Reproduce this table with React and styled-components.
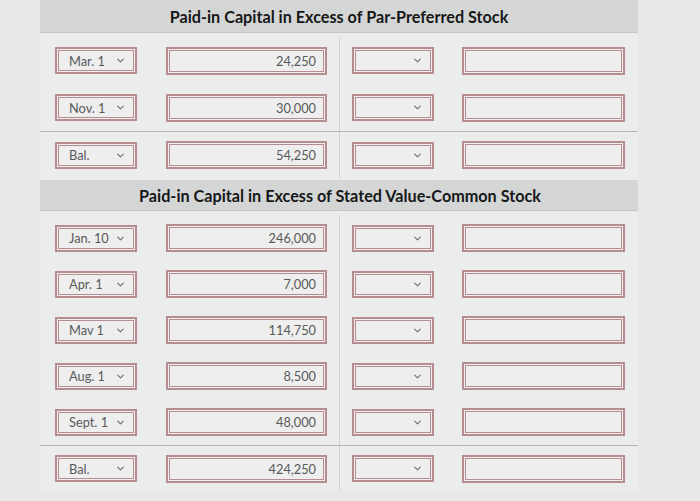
import React from 'react';
import styled, { createGlobalStyle } from 'styled-components';
import { ChevronDown } from 'lucide-react';

const GlobalStyle = createGlobalStyle`
  body {
    margin: 0;
    background: #e7e8e8;
    font-family: Lato, "Open Sans", sans-serif;
  }
`;

const Page = styled.div`
  width: 700px;
  height: 501px;
  overflow: hidden;
  padding-left: 40px;
  box-sizing: border-box;
`;

const Table = styled.div`
  width: 598px;
  background: #ebecec;
`;

const Header = styled.div`
  height: ${(p) => p.h}px;
  background: #d4d6d6;
  border-bottom: 1px solid #c4c6c6;
  box-sizing: border-box;
  display: flex;
  align-items: center;
  justify-content: center;
  margin-top: ${(p) => p.mt || 0}px;
`;

const Title = styled.div`
  font-weight: 700;
  font-size: 16.2px;
  color: #161818;
  padding-left: ${(p) => p.shift || 0}px;
`;

const Body = styled.div`
  padding-top: 4px;
`;

const Row = styled.div`
  display: grid;
  grid-template-columns: 300px 298px;
  height: ${(p) => p.h}px;
  border-top: ${(p) => (p.line ? '1px solid #b4b6b6' : 'none')};
  box-sizing: border-box;
`;

const Half = styled.div`
  display: flex;
  align-items: center;
  padding-left: ${(p) => (p.right ? 12 : 15)}px;
  gap: ${(p) => (p.right ? 28 : 29)}px;
  border-right: ${(p) => (p.right ? 'none' : '1px solid #cfd1d1')};
`;

const Boxed = styled.div`
  border: 2px solid #b68c91;
  box-shadow: inset 0 0 0 1px #f0efef, inset 0 0 0 2px #b68c91;
  background: #eeeeee;
  box-sizing: border-box;
  height: 27px;
  display: flex;
  align-items: center;
  font-size: 12.8px;
  color: #585a5a;
`;

const SelectBox = styled(Boxed)`
  width: 82px;
  padding: 0 9px 0 12px;
  justify-content: space-between;
`;

const AmountBox = styled(Boxed)`
  width: ${(p) => (p.right ? 163 : 161)}px;
  height: 28px;
  justify-content: flex-end;
  padding-right: 9px;
`;

const Chevron = styled(ChevronDown)`
  color: #6d6f72;
`;

function Entry({ date, amount, line, h }) {
  return (
    <Row line={line} h={h}>
      <Half>
        <SelectBox>
          <span>{date}</span>
          <Chevron size={11} strokeWidth={2.5} />
        </SelectBox>
        <AmountBox>{amount}</AmountBox>
      </Half>
      <Half right>
        <SelectBox>
          <span />
          <Chevron size={11} strokeWidth={2.5} />
        </SelectBox>
        <AmountBox right />
      </Half>
    </Row>
  );
}

const preferred = [
  { date: 'Mar. 1', amount: '24,250' },
  { date: 'Nov. 1', amount: '30,000' },
  { date: 'Bal.', amount: '54,250', line: true },
];

const common = [
  { date: 'Jan. 10', amount: '246,000' },
  { date: 'Apr. 1', amount: '7,000' },
  { date: 'Mav 1', amount: '114,750' },
  { date: 'Aug. 1', amount: '8,500' },
  { date: 'Sept. 1', amount: '48,000' },
  { date: 'Bal.', amount: '424,250', line: true },
];

export default function App() {
  return (
    <Page>
      <GlobalStyle />
      <Table>
        <Header h={33}>
          <Title>Paid-in Capital in Excess of Par-Preferred Stock</Title>
        </Header>
        <Body>
          {preferred.map((r) => (
            <Entry key={r.date} {...r} h={47} />
          ))}
        </Body>
        <Header h={31} mt={2}>
          <Title shift={2}>Paid-in Capital in Excess of Stated Value-Common Stock</Title>
        </Header>
        <Body>
          {common.map((r, i) => (
            <Entry key={i} {...r} h={46} />
          ))}
        </Body>
      </Table>
    </Page>
  );
}
